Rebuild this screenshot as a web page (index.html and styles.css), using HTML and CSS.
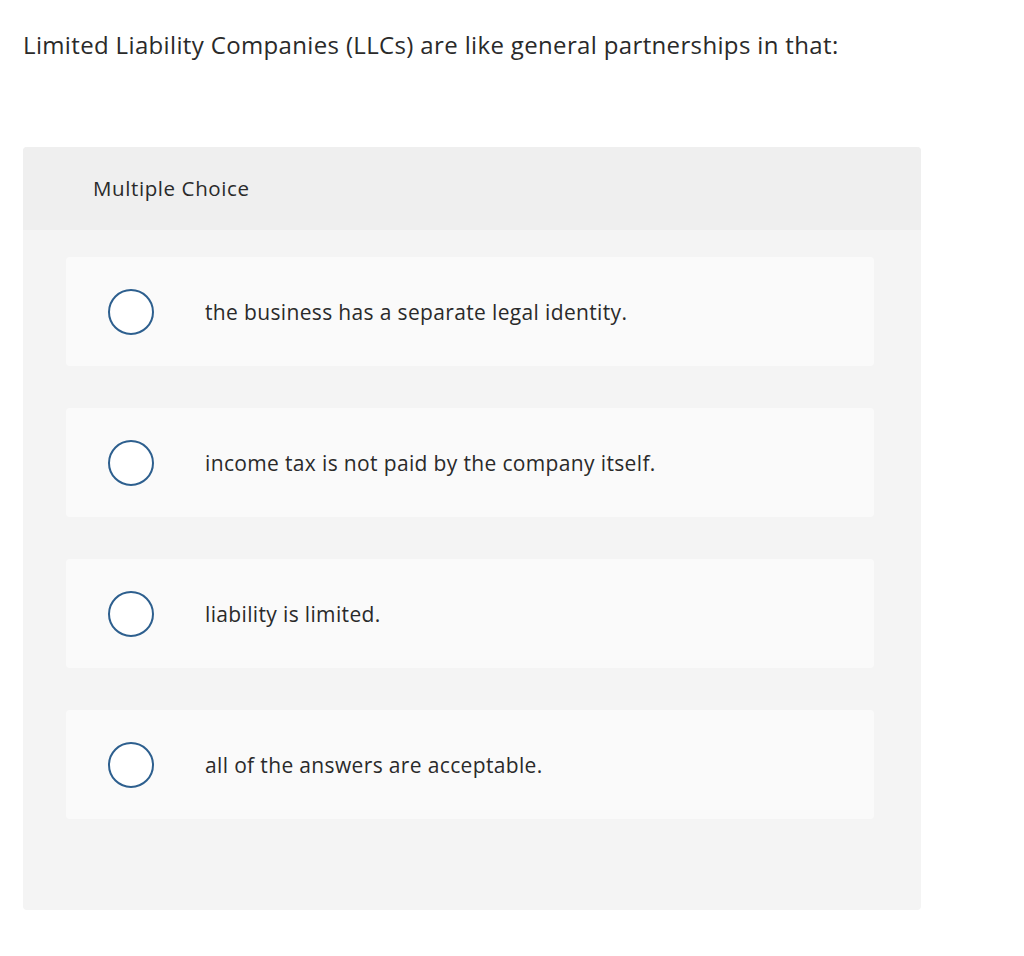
FILE: index.html
```html
<!DOCTYPE html>
<html>
<head>
<meta charset="utf-8">
<link rel="stylesheet" href="styles.css">
</head>
<body>
<p class="question">Limited Liability Companies (LLCs) are like general partnerships in that:</p>
<div class="card">
  <div class="card-head">Multiple Choice</div>
  <div class="card-body">
    <div class="option"><span class="radio"></span><span class="label">the business has a separate legal identity.</span></div>
    <div class="option"><span class="radio"></span><span class="label">income tax is not paid by the company itself.</span></div>
    <div class="option"><span class="radio"></span><span class="label">liability is limited.</span></div>
    <div class="option"><span class="radio"></span><span class="label">all of the answers are acceptable.</span></div>
  </div>
</div>
</body>
</html>
```
FILE: styles.css
```css
html, body {
  margin: 0;
  padding: 0;
  background: #ffffff;
}
body {
  font-family: "Open Sans", "Noto Sans", sans-serif;
  color: #222222;
  padding: 29px 103px 0 23px;
}
.question {
  margin: 0;
  font-size: 24px;
  line-height: 32px;
  letter-spacing: 0.35px;
  color: #2a2a2a;
}
.card {
  margin-top: 86px;
  background: #f4f4f4;
  border-radius: 4px;
  overflow: hidden;
}
.card-head {
  background: #efefef;
  height: 83px;
  box-sizing: border-box;
  padding: 28px 0 0 70px;
  font-size: 20.5px;
  line-height: 26px;
  letter-spacing: 0.6px;
  color: #2a2a2a;
}
.card-body {
  padding: 27px 47px 91px 43px;
  display: flex;
  flex-direction: column;
  gap: 42px;
}
.option {
  height: 109px;
  background: #fafafa;
  border-radius: 4px;
  display: flex;
  align-items: center;
  padding-left: 42px;
}
.radio {
  width: 42px;
  height: 42px;
  border: 2px solid #2d5f8e;
  border-radius: 50%;
  background: #ffffff;
  flex: none;
}
.label {
  margin-left: 51px;
  font-size: 21px;
  letter-spacing: 0.35px;
  color: #2a2a2a;
}
```
